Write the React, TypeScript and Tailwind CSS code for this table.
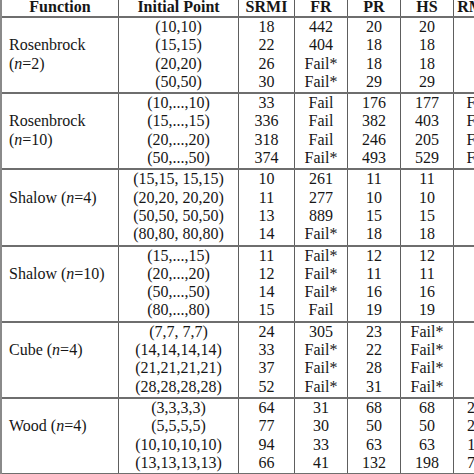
import type { ReactNode } from "react";

type Group = {
  fn: ReactNode[];
  pts: string[];
  srmi: string[];
  fr: string[];
  pr: string[];
  hs: string[];
  r: string[];
};

const groups: Group[] = [
  {
    fn: ["", "Rosenbrock", <>(<i>n</i>=2)</>, ""],
    pts: ["(10,10)", "(15,15)", "(20,20)", "(50,50)"],
    srmi: ["18", "22", "26", "30"],
    fr: ["442", "404", "Fail*", "Fail*"],
    pr: ["20", "18", "18", "29"],
    hs: ["20", "18", "18", "29"],
    r: ["", "", "", ""],
  },
  {
    fn: ["", "Rosenbrock", <>(<i>n</i>=10)</>, ""],
    pts: ["(10,...,10)", "(15,...,15)", "(20,...,20)", "(50,...,50)"],
    srmi: ["33", "336", "318", "374"],
    fr: ["Fail", "Fail", "Fail", "Fail*"],
    pr: ["176", "382", "246", "493"],
    hs: ["177", "403", "205", "529"],
    r: ["Fail", "Fail", "Fail", "Fail"],
  },
  {
    fn: ["", <>Shalow (<i>n</i>=4)</>, "", ""],
    pts: ["(15,15, 15,15)", "(20,20, 20,20)", "(50,50, 50,50)", "(80,80, 80,80)"],
    srmi: ["10", "11", "13", "14"],
    fr: ["261", "277", "889", "Fail*"],
    pr: ["11", "10", "15", "18"],
    hs: ["11", "10", "15", "18"],
    r: ["", "", "", ""],
  },
  {
    fn: ["", <>Shalow (<i>n</i>=10)</>, "", ""],
    pts: ["(15,...,15)", "(20,...,20)", "(50,...,50)", "(80,...,80)"],
    srmi: ["11", "12", "14", "15"],
    fr: ["Fail*", "Fail*", "Fail*", "Fail"],
    pr: ["12", "11", "16", "19"],
    hs: ["12", "11", "16", "19"],
    r: ["", "", "", ""],
  },
  {
    fn: ["", <>Cube (<i>n</i>=4)</>, "", ""],
    pts: ["(7,7, 7,7)", "(14,14,14,14)", "(21,21,21,21)", "(28,28,28,28)"],
    srmi: ["24", "33", "37", "52"],
    fr: ["305", "Fail*", "Fail*", "Fail*"],
    pr: ["23", "22", "28", "31"],
    hs: ["Fail*", "Fail*", "Fail*", "Fail*"],
    r: ["", "", "", ""],
  },
  {
    fn: ["", <>Wood (<i>n</i>=4)</>, "", ""],
    pts: ["(3,3,3,3)", "(5,5,5,5)", "(10,10,10,10)", "(13,13,13,13)"],
    srmi: ["64", "77", "94", "66"],
    fr: ["31", "30", "33", "41"],
    pr: ["68", "50", "63", "132"],
    hs: ["68", "50", "63", "198"],
    r: ["236", "224", "117", "745"],
  },
];

function Lines({ items, left }: { items: ReactNode[]; left?: boolean }) {
  return (
    <>
      {items.map((t, i) => (
        <div
          key={i}
          className={`h-[18.3px] leading-[18.3px] whitespace-nowrap ${left ? "text-left" : "text-center"}`}
        >
          {t}
        </div>
      ))}
    </>
  );
}

const cols = ["w-[117px]", "w-[120px]", "w-[56px]", "w-[53px]", "w-[53px]", "w-[53px]", "w-[50px]"];

export default function App() {
  return (
    <div
      className="w-[474px] h-[474px] overflow-hidden bg-white text-[#161616] text-[16px]"
      style={{ fontFamily: '"Liberation Serif", "Times New Roman", serif' }}
    >
      <div className="w-[504px] border-l-2 border-[#8a8a8a]">
        {/* header */}
        <div className="flex h-[18px] border-b-2 border-[#6e6e6e] font-bold leading-[14px]">
          {["Function", "Initial Point", "SRMI", "FR", "PR", "HS", "RMIL"].map((h, i) => (
            <div
              key={h}
              className={`${cols[i]} shrink-0 text-center whitespace-nowrap ${i < 6 ? "border-r border-[#5e5e5e]" : ""}`}
            >
              {h}
            </div>
          ))}
        </div>

        {groups.map((g, gi) => (
          <div key={gi} className="flex border-b-2 border-[#6e6e6e]">
            <div className={`${cols[0]} shrink-0 pl-[7px] pb-[1px] border-r border-[#5e5e5e]`}>
              <Lines items={g.fn} left />
            </div>
            {[g.pts, g.srmi, g.fr, g.pr, g.hs, g.r].map((c, ci) => (
              <div
                key={ci}
                className={`${cols[ci + 1]} shrink-0 pb-[1px] ${ci < 5 ? "border-r border-[#5e5e5e]" : ""}`}
              >
                <Lines items={c} />
              </div>
            ))}
          </div>
        ))}
      </div>
    </div>
  );
}
